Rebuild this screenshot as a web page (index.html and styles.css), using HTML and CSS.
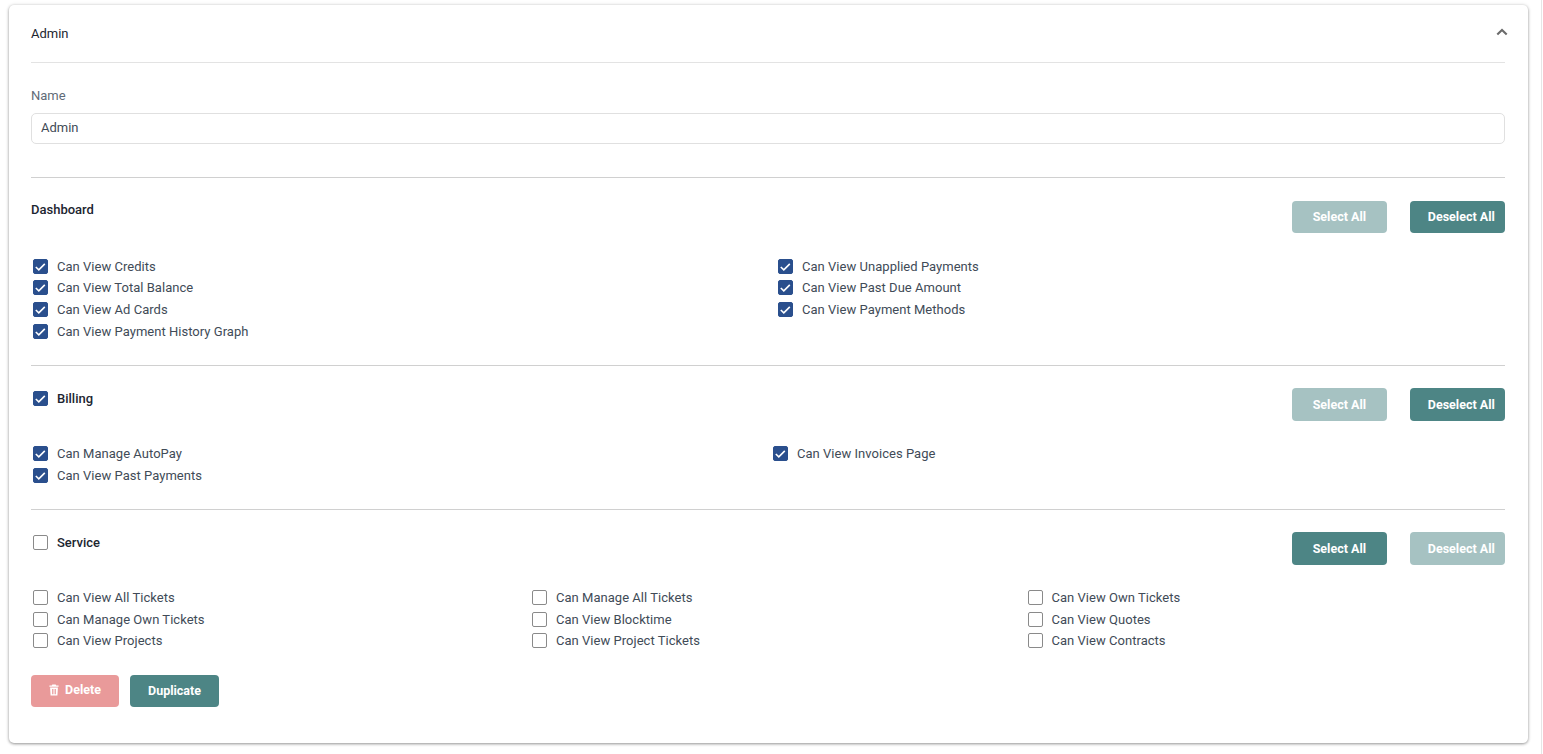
FILE: index.html
```html
<!DOCTYPE html>
<html lang="en">
<head>
<meta charset="utf-8">
<title>Admin</title>
<link rel="stylesheet" href="styles.css">
</head>
<body>
<div class="page">
<main class="card">
  <header class="card-head">
    <span class="card-title">Admin</span>
    <svg class="chevron" viewBox="0 0 12 8" width="12" height="8"><path d="M1.300 6.600 6 2l4.700 4.600" fill="none" stroke="#6b6b6b" stroke-width="2.100"/></svg>
  </header>
  <hr class="rule rule-light">
  <div class="field">
    <label class="field-label" for="name">Name</label>
    <input class="field-input" id="name" type="text" value="Admin">
  </div>
  <hr class="rule rule-top">

  <section class="group">
    <div class="group-head">
      <span class="group-title group-title-plain">Dashboard</span>
      <div class="group-actions">
        <button class="btn btn-off btn-select">Select All</button>
        <button class="btn btn-deselect">Deselect All</button>
      </div>
    </div>
    <div class="perm-grid grid-dash">
      <div class="perm"><span class="box on"><svg viewBox="0 0 13 13"><path d="M1.800 7 4.800 9.800 10.800 3.900"/></svg></span>Can View Credits</div>
      <div class="perm"><span class="box on"><svg viewBox="0 0 13 13"><path d="M1.800 7 4.800 9.800 10.800 3.900"/></svg></span>Can View Unapplied Payments</div>
      <div class="perm"><span class="box on"><svg viewBox="0 0 13 13"><path d="M1.800 7 4.800 9.800 10.800 3.900"/></svg></span>Can View Total Balance</div>
      <div class="perm"><span class="box on"><svg viewBox="0 0 13 13"><path d="M1.800 7 4.800 9.800 10.800 3.900"/></svg></span>Can View Past Due Amount</div>
      <div class="perm"><span class="box on"><svg viewBox="0 0 13 13"><path d="M1.800 7 4.800 9.800 10.800 3.900"/></svg></span>Can View Ad Cards</div>
      <div class="perm"><span class="box on"><svg viewBox="0 0 13 13"><path d="M1.800 7 4.800 9.800 10.800 3.900"/></svg></span>Can View Payment Methods</div>
      <div class="perm"><span class="box on"><svg viewBox="0 0 13 13"><path d="M1.800 7 4.800 9.800 10.800 3.900"/></svg></span>Can View Payment History Graph</div>
    </div>
  </section>
  <hr class="rule">

  <section class="group">
    <div class="group-head">
      <span class="group-title"><span class="box on"><svg viewBox="0 0 13 13"><path d="M1.800 7 4.800 9.800 10.800 3.900"/></svg></span>Billing</span>
      <div class="group-actions">
        <button class="btn btn-off btn-select">Select All</button>
        <button class="btn btn-deselect">Deselect All</button>
      </div>
    </div>
    <div class="perm-grid grid-bill">
      <div class="perm"><span class="box on"><svg viewBox="0 0 13 13"><path d="M1.800 7 4.800 9.800 10.800 3.900"/></svg></span>Can Manage AutoPay</div>
      <div class="perm"><span class="box on"><svg viewBox="0 0 13 13"><path d="M1.800 7 4.800 9.800 10.800 3.900"/></svg></span>Can View Invoices Page</div>
      <div class="perm"><span class="box on"><svg viewBox="0 0 13 13"><path d="M1.800 7 4.800 9.800 10.800 3.900"/></svg></span>Can View Past Payments</div>
    </div>
  </section>
  <hr class="rule">

  <section class="group">
    <div class="group-head">
      <span class="group-title"><span class="box"></span>Service</span>
      <div class="group-actions">
        <button class="btn btn-select">Select All</button>
        <button class="btn btn-off btn-deselect">Deselect All</button>
      </div>
    </div>
    <div class="perm-grid grid-serv">
      <div class="perm"><span class="box"></span>Can View All Tickets</div>
      <div class="perm"><span class="box"></span>Can Manage All Tickets</div>
      <div class="perm"><span class="box"></span>Can View Own Tickets</div>
      <div class="perm"><span class="box"></span>Can Manage Own Tickets</div>
      <div class="perm"><span class="box"></span>Can View Blocktime</div>
      <div class="perm"><span class="box"></span>Can View Quotes</div>
      <div class="perm"><span class="box"></span>Can View Projects</div>
      <div class="perm"><span class="box"></span>Can View Project Tickets</div>
      <div class="perm"><span class="box"></span>Can View Contracts</div>
    </div>
  </section>

  <footer class="card-actions">
    <button class="btn btn-delete"><svg class="trash" viewBox="0 0 12 14" width="10" height="12" preserveAspectRatio="none"><path d="M4 0.500h4l.6 1.200H11.500v1.500H.5V1.700h2.900zM1.300 4.200h9.400l-.6 9.300H1.900zM3.700 5.700v6.300h1V5.700zm1.800 0v6.300h1V5.700zm1.800 0v6.300h1V5.700z" fill="#fff" fill-rule="evenodd"/></svg>Delete</button>
    <button class="btn btn-dup">Duplicate</button>
  </footer>
</main>
</div>
</body>
</html>
```

FILE: styles.css
```css
* { box-sizing: border-box; }
html, body { margin: 0; height: 100%; overflow: hidden; background: #fff; }
body {
  font-family: Roboto, "Liberation Sans", sans-serif;
  font-size: 13px;
  color: #333d47;
}
.page {
  width: 1542px;
  height: 754px;
  padding: 5px 13px 0 9px;
  border-right: 1px solid #e6e6e6;
}
.card {
  width: 1519px;
  height: 738px;
  padding: 0 23px 0 22px;
  background: #fff;
  border-radius: 5px;
  box-shadow: 0 1px 3px rgba(0,0,0,.38), 0 0 4px rgba(0,0,0,.1);
}
.card-head {
  height: 57px;
  display: flex;
  justify-content: space-between;
  align-items: center;
}
.card-title { font-size: 13px; color: #1c2530; }
.chevron { margin-right: -3px; margin-top: -4px; }
.rule { margin: 0; border: 0; height: 1px; background: #d0d0d0; }
.rule-light { background: #e3e3e3; }
.field { padding-top: 25px; height: 114px; }
.field-label { display: block; height: 25px; line-height: 16px; font-size: 13px; color: #5f6b78; }
.field-input {
  display: block;
  width: 100%;
  height: 31px;
  padding: 0 9px 2px;
  border: 1px solid #e0e0e0;
  border-radius: 5px;
  font: 13px Roboto, sans-serif;
  color: #3f4a56;
  background: #fff;
}
.group { padding: 22.600px 0 22.800px; }
.group:last-of-type { padding-bottom: 0; }
.group-head { display: flex; justify-content: space-between; align-items: flex-start; height: 54.400px; }
.group-title {
  display: flex;
  align-items: center;
  height: 20px;
  font-weight: 500;
  font-size: 13px;
  color: #1c2530;
}
.group-title-plain { height: 18px; }
.group-actions { display: flex; gap: 22.600px; }
.btn {
  height: 32.400px;
  width: 95.400px;
  padding: 0;
  border: 0;
  border-radius: 4px;
  background: #4d8585;
  color: #fff;
  font: 700 12.500px Roboto, sans-serif;
}
.btn-off { background: #a6c2c2; }
.btn-deselect { padding-left: 8px; }
.perm-grid { display: grid; grid-auto-rows: 21.700px; }
.grid-dash { grid-template-columns: 745px 1fr; margin: .2px 0 -.2px; }
.grid-bill { grid-template-columns: 740px 1fr; }
.grid-serv { grid-template-columns: 499px 495.500px 1fr; }
.perm { display: flex; align-items: center; font-size: 13px; letter-spacing: .03px; color: #414b57; }
.box {
  flex: none;
  width: 15px;
  height: 15px;
  margin: 0 9px 0 2px;
  border: 1px solid #8a8a8a;
  border-radius: 2px;
  background: #fff;
}
.box.on { background: #2a4f8d; border-color: #2a4f8d; }
.box svg { display: block; width: 13px; height: 13px; fill: none; stroke: #fff; stroke-width: 1.600; }
.card-actions { display: flex; gap: 11px; margin-top: 23px; }
.btn-delete {
  width: 88px;
  height: 32px;
  padding-bottom: 2px;
  background: #e99a9a;
  display: flex;
  align-items: center;
  justify-content: center;
  gap: 6px;
}
.btn-dup { width: 89px; height: 32px; }
```
